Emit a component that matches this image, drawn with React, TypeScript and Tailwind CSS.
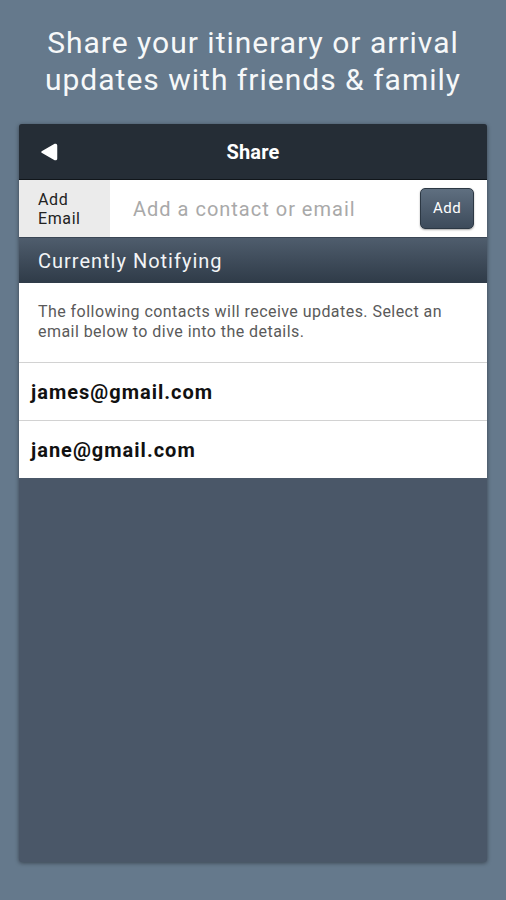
export default function App() {
  const contacts = ['james@gmail.com', 'jane@gmail.com'];
  return (
    <div className="h-[900px] w-full overflow-hidden bg-[#65798c] font-['Roboto','Liberation_Sans',sans-serif]">
      <h1 className="pt-[24px] text-center text-[30px] leading-[37px] font-normal tracking-[1px] text-[#f6f8f9]">
        Share your itinerary or arrival
        <br />
        updates with friends &amp; family
      </h1>

      <div className="mx-auto mt-[26px] flex h-[738px] w-[468px] flex-col overflow-hidden rounded-[3px] bg-[#4a5768] shadow-[0_1px_4px_rgba(0,0,0,0.45)]">
        {/* header */}
        <div className="relative flex h-[56px] shrink-0 items-center justify-center border-b border-[#11161b] bg-[#252d36]">
          <svg className="absolute left-[21px] top-[18px]" width="18" height="20" viewBox="0 0 18 20">
            <path d="M2 10 L15 2.5 Q16.5 2 16.5 3.5 L16.5 16.5 Q16.5 18 15 17.5 Z" fill="#fff" stroke="#fff" strokeWidth="1.5" strokeLinejoin="round" />
          </svg>
          <span className="text-[20px] font-bold tracking-[0.2px] text-white">Share</span>
        </div>

        {/* add email row */}
        <div className="flex h-[57px] shrink-0 items-stretch bg-white">
          <div className="flex w-[91px] items-center bg-[#ebebeb] pl-[19px] text-[16px] leading-[19px] tracking-[0.6px] text-[#222]">
            Add
            <br />
            Email
          </div>
          <div className="flex flex-1 items-center pl-[23px] text-[20px] tracking-[1px] text-[#a9a9a9]">Add a contact or email</div>
          <div className="flex items-center pr-[13px]">
            <button className="h-[41px] w-[54px] rounded-[5px] border border-[#2c3844] bg-gradient-to-b from-[#5f6f80] to-[#3d4b5b] text-[15px] tracking-[0.5px] text-white shadow-[0_1px_2px_rgba(0,0,0,0.35)]">
              Add
            </button>
          </div>
        </div>

        {/* section heading */}
        <div className="flex h-[46px] shrink-0 items-center border-t border-[#3a4655] bg-gradient-to-b from-[#4f5d6d] to-[#2f3b48] pl-[19px] text-[20px] tracking-[1px] text-[#f2f4f6]">
          Currently Notifying
        </div>

        {/* description */}
        <div className="h-[79px] shrink-0 bg-white px-[19px] pt-[19px] text-[16px] leading-[19.5px] tracking-[0.45px] text-[#5a5a5a]">
          The following contacts will receive updates. Select an email below to dive into the details.
        </div>

        {contacts.map((c) => (
          <div key={c} className="flex h-[58px] shrink-0 items-center border-t border-[#d2d2d2] bg-white pl-[12px] text-[20px] font-bold tracking-[1px] text-[#111]">
            {c}
          </div>
        ))}
      </div>
    </div>
  );
}
